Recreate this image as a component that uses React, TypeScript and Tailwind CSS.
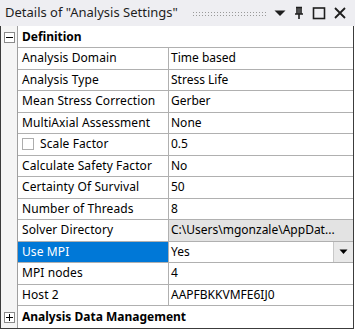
import React from 'react';

const rows = [
  { name: 'Analysis Domain', value: 'Time based' },
  { name: 'Analysis Type', value: 'Stress Life' },
  { name: 'Mean Stress Correction', value: 'Gerber' },
  { name: 'MultiAxial Assessment', value: 'None' },
  { name: 'Scale Factor', value: '0.5', check: true },
  { name: 'Calculate Safety Factor', value: 'No' },
  { name: 'Certainty Of Survival', value: '50' },
  { name: 'Number of Threads', value: '8' },
  { name: 'Solver Directory', value: 'C:\\Users\\mgonzale\\AppDat...', readOnly: true },
  { name: 'Use MPI', value: 'Yes', selected: true },
  { name: 'MPI nodes', value: '4' },
  { name: 'Host 2', value: 'AAPFBKKVMFE6IJ0' },
];

function Expander({ open }: { open: boolean }) {
  return (
    <div className="w-[11px] h-[11px] border border-[#8a8a8a] bg-white flex items-center justify-center relative">
      <div className="w-[7px] h-px bg-black" />
      {!open && <div className="absolute w-px h-[7px] bg-black" />}
    </div>
  );
}

export default function App() {
  return (
    <div
      className="w-[355px] h-[329px] bg-white text-[12px] text-black overflow-hidden"
      style={{ fontFamily: '"Noto Sans", "Open Sans", sans-serif' }}
    >
      {/* Title bar */}
      <div className="h-[26px] bg-[#eeeef2] flex items-center pl-[5px] pr-[8px] text-[#1e1e1e]">
        <span className="text-[13px] whitespace-nowrap">Details of "Analysis Settings"</span>
        <div className="flex-1 h-[5px] ml-[14px] mr-[6px] mt-px bg-[radial-gradient(#9a9a9a_0.6px,transparent_0.8px)] bg-[length:3px_3px]" />
        <div className="flex items-center gap-[7px]">
          <svg width="12" height="12" viewBox="0 0 12 12">
            <path d="M0.5 3.5h11L6 9z" fill="#1e1e1e" />
          </svg>
          <svg width="12" height="14" viewBox="0 0 12 14">
            <path d="M3 1.5h6M4 1.5v6M8 1.5v6M2 8h8M6 8v5" stroke="#1e1e1e" strokeWidth="1.6" fill="none" />
            <path d="M6 2v6" stroke="#1e1e1e" strokeWidth="1.5" />
          </svg>
          <svg width="14" height="14" viewBox="0 0 14 14">
            <rect x="1.5" y="2" width="11" height="10.5" stroke="#1e1e1e" strokeWidth="1.6" fill="none" />
          </svg>
          <svg width="14" height="14" viewBox="0 0 14 14">
            <path d="M2 2l10 10M12 2L2 12" stroke="#1e1e1e" strokeWidth="1.8" />
          </svg>
        </div>
      </div>

      {/* Property grid */}
      <div className="w-[354px] h-[303px] border border-t-0 border-[#3c3c3c] flex flex-col">
        <div className="flex h-[22px] shrink-0">
          <div className="w-[17px] flex items-center justify-center border-r border-[#a0a0a0] bg-[#f5f5f5]">
            <Expander open />
          </div>
          <div className="flex-1 flex items-center pl-[4px] font-bold border-b border-[#b0b0b0]">Definition</div>
        </div>
        {rows.map((r) => (
          <div key={r.name} className="flex h-[21.5px] shrink-0">
            <div className="w-[17px] border-r border-[#a0a0a0] bg-[#f5f5f5]" />
            <div
              className={`w-[151px] flex items-center pl-[4px] border-b border-r border-[#b0b0b0] whitespace-nowrap tracking-[0.1px] ${
                r.selected ? 'bg-[#0078d7] text-white' : ''
              }`}
            >
              {r.check && <div className="w-[12px] h-[12px] border border-[#adadad] bg-white mr-[6px]" />}
              {r.name}
            </div>
            <div
              className={`flex-1 flex items-center pl-[2px] border-b border-[#b0b0b0] whitespace-nowrap ${
                r.readOnly ? 'bg-[#e3e3e3]' : ''
              }`}
            >
              <span className="flex-1">{r.value}</span>
              {r.selected && (
                <div className="w-[20px] h-full bg-[#e9e9e9] border-l border-[#c8c8c8] flex items-center justify-center">
                  <svg width="9" height="6" viewBox="0 0 9 6">
                    <path d="M0.5 0.5h8L4.5 5z" fill="#000" />
                  </svg>
                </div>
              )}
            </div>
          </div>
        ))}
        <div className="flex flex-1">
          <div className="w-[17px] flex items-center justify-center border-r border-[#a0a0a0] bg-[#f5f5f5]">
            <Expander open={false} />
          </div>
          <div className="flex-1 flex items-center pl-[4px] font-bold">Analysis Data Management</div>
        </div>
      </div>
    </div>
  );
}
